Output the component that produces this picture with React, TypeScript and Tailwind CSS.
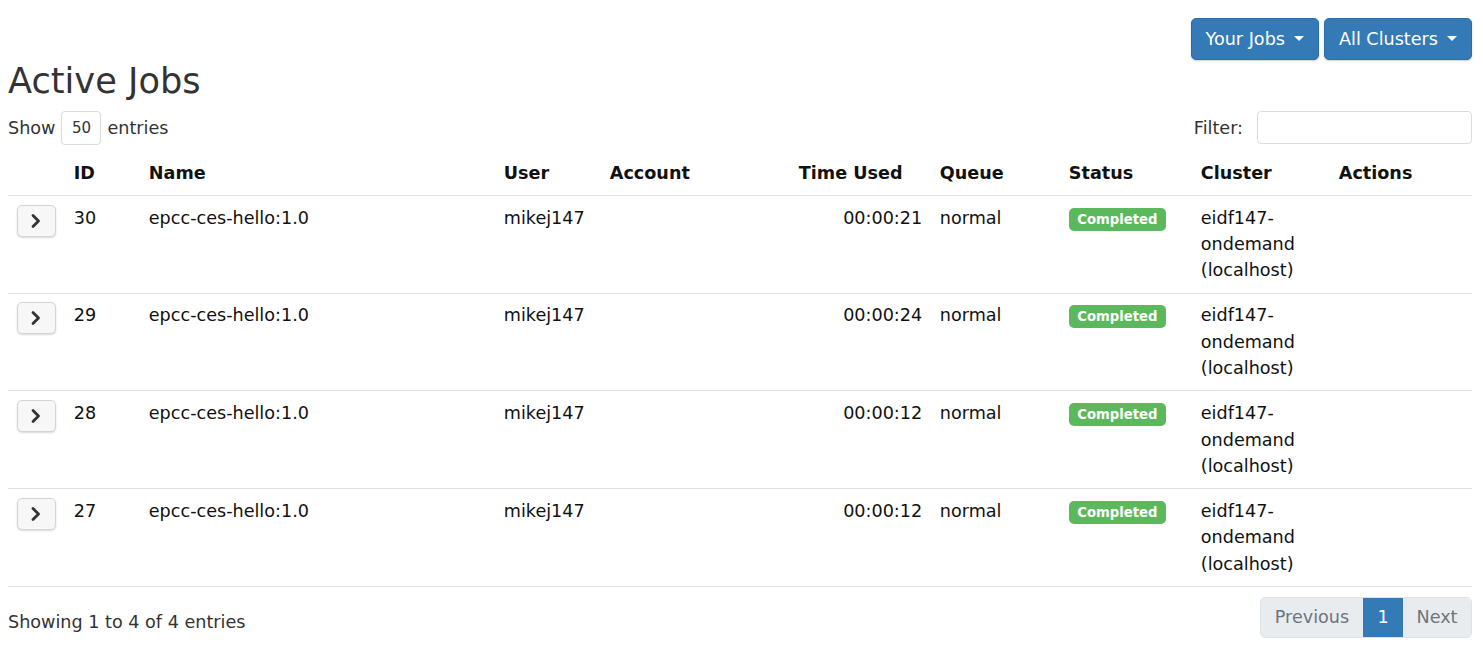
import React from 'react';

type Job = {
    id: number;
    name: string;
    user: string;
    account: string;
    timeUsed: string;
    queue: string;
    status: string;
    cluster: string;
};

const jobs: Job[] = [
    { id: 30, name: 'epcc-ces-hello:1.0', user: 'mikej147', account: '', timeUsed: '00:00:21', queue: 'normal', status: 'Completed', cluster: 'eidf147-ondemand (localhost)' },
    { id: 29, name: 'epcc-ces-hello:1.0', user: 'mikej147', account: '', timeUsed: '00:00:24', queue: 'normal', status: 'Completed', cluster: 'eidf147-ondemand (localhost)' },
    { id: 28, name: 'epcc-ces-hello:1.0', user: 'mikej147', account: '', timeUsed: '00:00:12', queue: 'normal', status: 'Completed', cluster: 'eidf147-ondemand (localhost)' },
    { id: 27, name: 'epcc-ces-hello:1.0', user: 'mikej147', account: '', timeUsed: '00:00:12', queue: 'normal', status: 'Completed', cluster: 'eidf147-ondemand (localhost)' },
];

function Caret() {
    return <span className="ml-[9px] inline-block align-[3px] border-x-[5px] border-t-[5px] border-x-transparent border-t-white" />;
}

function Chevron() {
    return (
        <svg width="12" height="16" viewBox="0 0 12 16" fill="none">
            <polyline points="3,2.5 8.5,8 3,13.5" stroke="#333" strokeWidth="2.8" strokeLinecap="round" strokeLinejoin="round" />
        </svg>
    );
}

export default function App() {
    return (
        <div className="bg-white text-[#333] text-[17.6px] leading-[1.5] px-[8px] pt-[18px] pb-[10px] w-[1483px]" style={{ fontFamily: '"DejaVu Sans", sans-serif' }}>
            {/* Top filters */}
            <div className="flex justify-end gap-[5px] pr-[3px]">
                <button className="h-[41.6px] px-[14px] rounded-[5px] bg-[#337ab7] border border-[#2e6da4] text-white shadow-[0_1px_2px_rgba(0,0,0,0.2)] flex items-center">
                    Your Jobs <Caret />
                </button>
                <button className="h-[41.6px] px-[14px] rounded-[5px] bg-[#337ab7] border border-[#2e6da4] text-white shadow-[0_1px_2px_rgba(0,0,0,0.2)] flex items-center">
                    All Clusters <Caret />
                </button>
            </div>

            <h1 className="text-[35.2px] leading-[1.2] font-normal text-[#333]">Active Jobs</h1>

            {/* Length + filter */}
            <div className="flex items-center justify-between mt-[9px] pr-[3px]">
                <div className="flex items-center gap-[6px]">
                    <span>Show</span>
                    <div className="w-[40px] h-[34px] border border-[#dcdcdc] rounded-[4px] flex items-center justify-center text-[15px]">50</div>
                    <span>entries</span>
                </div>
                <div className="flex items-center gap-[14px]">
                    <span>Filter:</span>
                    <div className="w-[215px] h-[33px] border border-[#dcdcdc] rounded-[4px]" />
                </div>
            </div>

            {/* Jobs table */}
            <table className="table-fixed w-[1464px] mt-[6px] border-collapse text-[#111]">
                <colgroup>
                    <col className="w-[57px]" />
                    <col className="w-[75px]" />
                    <col className="w-[355px]" />
                    <col className="w-[106px]" />
                    <col className="w-[189px]" />
                    <col className="w-[141px]" />
                    <col className="w-[129px]" />
                    <col className="w-[132px]" />
                    <col className="w-[138px]" />
                    <col className="w-[142px]" />
                </colgroup>
                <thead>
                    <tr className="border-b border-[#dee2e6]">
                        <th className="p-[8.8px]"></th>
                        <th className="p-[8.8px] text-left font-bold">ID</th>
                        <th className="p-[8.8px] text-left font-bold">Name</th>
                        <th className="p-[8.8px] text-left font-bold">User</th>
                        <th className="p-[8.8px] text-left font-bold">Account</th>
                        <th className="p-[8.8px] text-left font-bold whitespace-nowrap">Time Used</th>
                        <th className="p-[8.8px] text-left font-bold">Queue</th>
                        <th className="p-[8.8px] text-left font-bold">Status</th>
                        <th className="p-[8.8px] text-left font-bold">Cluster</th>
                        <th className="p-[8.8px] text-left font-bold">Actions</th>
                    </tr>
                </thead>
                <tbody>
                    {jobs.map((job) => (
                        <tr key={job.id} className="border-b border-[#dee2e6] align-top">
                            <td className="p-[8.8px]">
                                <button className="w-[39px] h-[32px] rounded-[5px] bg-[#f7f7f7] border border-[#d4d4d4] shadow-[0_1px_2px_rgba(0,0,0,0.15)] flex items-center justify-center">
                                    <Chevron />
                                </button>
                            </td>
                            <td className="p-[8.8px]">{job.id}</td>
                            <td className="p-[8.8px]">{job.name}</td>
                            <td className="p-[8.8px]">{job.user}</td>
                            <td className="p-[8.8px]">{job.account}</td>
                            <td className="p-[8.8px] text-right">{job.timeUsed}</td>
                            <td className="p-[8.8px]">{job.queue}</td>
                            <td className="p-[8.8px]">
                                <span className="inline-flex items-center h-[23px] mt-[3px] px-[8.5px] rounded-[5px] bg-[#5cb85c] text-white text-[13.2px] font-bold leading-none">
                                    {job.status}
                                </span>
                            </td>
                            <td className="p-[8.8px]">{job.cluster}</td>
                            <td className="p-[8.8px]"></td>
                        </tr>
                    ))}
                </tbody>
            </table>

            {/* Footer */}
            <div className="flex items-center justify-between mt-[10px] pr-[3px]">
                <div className="pt-[10px]">Showing 1 to 4 of 4 entries</div>
                <div className="flex h-[41px] rounded-[5px] overflow-hidden border border-[#dee2e6]">
                    <span className="w-[102px] flex items-center justify-center bg-[#e9ecef] text-[#6c757d]">Previous</span>
                    <span className="w-[40px] flex items-center justify-center bg-[#337ab7] text-white">1</span>
                    <span className="w-[68px] flex items-center justify-center bg-[#e9ecef] text-[#6c757d]">Next</span>
                </div>
            </div>
        </div>
    );
}
